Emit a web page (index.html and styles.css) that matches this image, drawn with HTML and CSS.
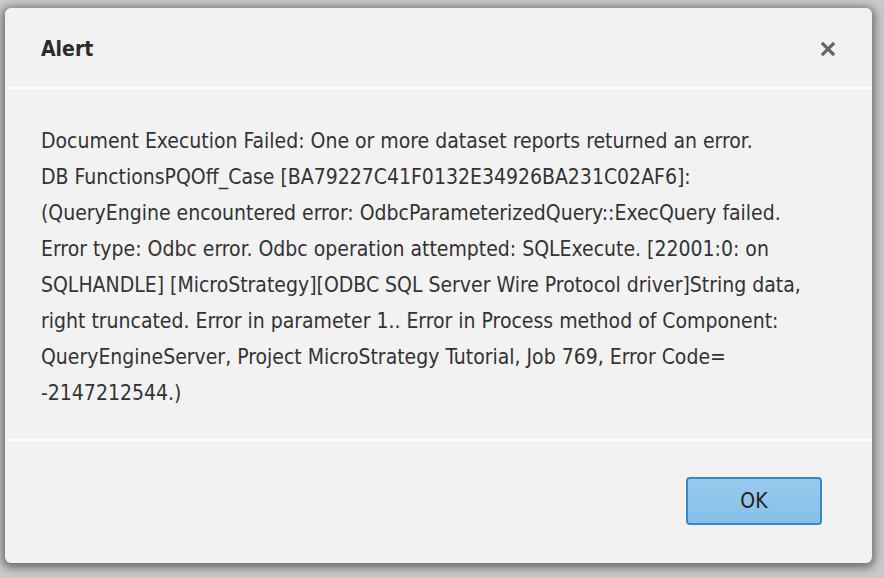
FILE: index.html
```html
<!DOCTYPE html>
<html>
<head>
<meta charset="utf-8">
<link rel="stylesheet" href="styles.css">
</head>
<body>
<div class="dialog">
  <div class="header">
    <div class="title">Alert</div>
    <div class="close">
      <svg width="14" height="14" viewBox="0 0 14 14"><path d="M2 2 L12 12 M12 2 L2 12" stroke="#666" stroke-width="3.2" stroke-linecap="square"/></svg>
    </div>
  </div>
  <div class="body">
    <p class="msg">Document Execution Failed: One or more dataset reports returned an error.<br>DB FunctionsPQOff_Case [BA79227C41F0132E34926BA231C02AF6]:<br>(QueryEngine encountered error: OdbcParameterizedQuery::ExecQuery failed.<br>Error type: Odbc error. Odbc operation attempted: SQLExecute. [22001:0: on<br>SQLHANDLE] [MicroStrategy][ODBC SQL Server Wire Protocol driver]String data,<br>right truncated. Error in parameter 1.. Error in Process method of Component:<br>QueryEngineServer, Project MicroStrategy Tutorial, Job 769, Error Code=<br>-2147212544.)</p>
  </div>
  <div class="footer">
    <button class="ok">OK</button>
  </div>
</div>
</body>
</html>
```

FILE: styles.css
```css
html, body {
  margin: 0;
  padding: 0;
}
body {
  width: 884px;
  height: 578px;
  background: #c9c9c9;
  overflow: hidden;
  font-family: "DejaVu Sans Condensed", "DejaVu Sans", sans-serif;
  color: #333;
}
.dialog {
  margin: 8px 0 0 5px;
  width: 867px;
  height: 555px;
  background: #f2f2f2;
  border-radius: 6px;
  box-shadow: 0 2px 8px 3px rgba(0,0,0,0.45);
  display: flex;
  flex-direction: column;
  box-sizing: border-box;
}
.header {
  height: 81px;
  border-bottom: 2px solid #ffffff;
  display: flex;
  align-items: center;
  justify-content: space-between;
  padding: 0 37px 0 36px;
  box-sizing: border-box;
}
.title {
  font-weight: bold;
  font-size: 21px;
  color: #2b2b2b;
  margin-top: 2px;
}
.close {
  display: flex;
  margin-top: 2px;
}
.body {
  height: 352px;
  border-bottom: 2px solid #ffffff;
  padding: 34px 0 0 36px;
  box-sizing: border-box;
}
.msg {
  margin: 0;
  font-size: 21px;
  line-height: 36px;
  white-space: nowrap;
}
.footer {
  flex: 1;
  display: flex;
  justify-content: flex-end;
  align-items: flex-start;
  padding: 36px 50px 0 0;
}
.ok {
  width: 136px;
  height: 48px;
  background: linear-gradient(#97cbee, #86c0e8);
  border: 2px solid #3c86c4;
  border-radius: 4px;
  font-family: "DejaVu Sans Condensed", "DejaVu Sans", sans-serif;
  font-size: 21px;
  color: #222;
  padding: 0;
}
```
